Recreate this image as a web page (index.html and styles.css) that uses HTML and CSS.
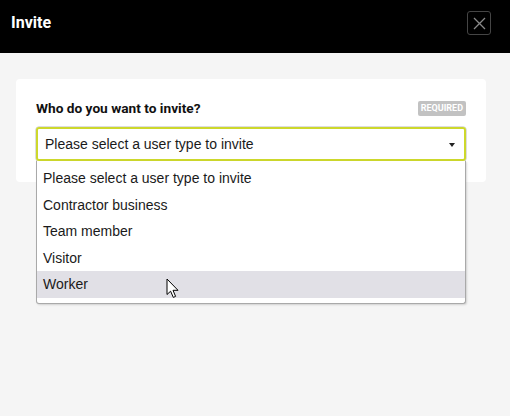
FILE: index.html
```html
<!DOCTYPE html>
<html>
<head>
<meta charset="utf-8">
<link rel="stylesheet" href="styles.css">
</head>
<body>
<div class="modal">
  <header class="modal-header">
    <h1 class="modal-title">Invite</h1>
    <button class="close-btn" aria-label="Close">
      <svg width="13" height="13" viewBox="0 0 13 13"><path d="M1 1L12 12M12 1L1 12" stroke="#8a8a8a" stroke-width="1.3" fill="none"/></svg>
    </button>
  </header>
  <main class="modal-body">
    <section class="card">
      <div class="field-head">
        <label class="field-label">Who do you want to invite?</label>
        <span class="badge">REQUIRED</span>
      </div>
      <div class="select-wrap">
        <div class="select">
          <span class="select-value">Please select a user type to invite</span>
          <span class="caret"></span>
        </div>
        <ul class="dropdown">
          <li class="option">Please select a user type to invite</li>
          <li class="option">Contractor business</li>
          <li class="option">Team member</li>
          <li class="option">Visitor</li>
          <li class="option active">Worker
            <svg class="cursor" width="14" height="21" viewBox="0 0 14 21"><path d="M1 1V16.5L4.6 13.2L7.3 19.4L9.6 18.4L7 12.3H12Z" fill="#fff" stroke="#000" stroke-width="1" stroke-linejoin="round"/></svg>
          </li>
        </ul>
      </div>
    </section>
  </main>
</div>
</body>
</html>
```
FILE: styles.css
```css
* { box-sizing: border-box; }
html, body { margin: 0; padding: 0; }
body {
  width: 510px;
  height: 416px;
  background: #f5f5f5;
  font-family: Roboto, "Liberation Sans", sans-serif;
  overflow: hidden;
}
.modal-header {
  height: 53px;
  background: #000;
  display: flex;
  align-items: center;
  justify-content: space-between;
  padding: 0 19px 0 11px;
}
.modal-title {
  margin: 0;
  color: #fff;
  font-size: 16px;
  font-weight: 700;
  margin-top: -8px;
}
.close-btn {
  width: 24px;
  height: 24px;
  border: 1px solid #454545;
  border-radius: 3px;
  background: #000;
  padding: 0;
  display: flex;
  align-items: center;
  justify-content: center;
  margin-top: -7px;
}
.modal-body {
  padding: 26px 24px 0 16px;
}
.card {
  background: #fff;
  border-radius: 4px;
  padding: 21px 20px 21px 20px;
}
.field-head {
  display: flex;
  justify-content: space-between;
  align-items: center;
  height: 16px;
  margin-bottom: 11px;
}
.field-label {
  font-size: 13.7px;
  font-weight: 700;
  color: #111;
}
.badge {
  background: #c2c2c2;
  color: #fff;
  font-size: 9px;
  font-weight: 700;
  height: 15px;
  line-height: 15px;
  padding: 0 3px;
  border-radius: 2px;
}
.select-wrap { position: relative; }
.select {
  height: 34px;
  border: 2px solid #cdd82c;
  border-radius: 3px;
  box-shadow: 0 0 0 0.5px #bbb;
  display: flex;
  align-items: center;
  justify-content: space-between;
  padding: 0 9px 0 7px;
  font-family: "Liberation Sans", Arial, sans-serif;
  font-size: 14px;
  color: #1a1a1a;
}
.caret {
  width: 0; height: 0;
  border-left: 3.5px solid transparent;
  border-right: 3.5px solid transparent;
  border-top: 4px solid #222;
  margin-top: 1px;
}
.dropdown {
  position: absolute;
  left: 0;
  right: 0;
  top: 34px;
  margin: 0;
  padding: 4px 0 5px;
  list-style: none;
  background: #fff;
  border: 1px solid #a9a9a9;
  border-top: none;
  border-radius: 0 0 3px 3px;
  box-shadow: 1px 1px 2px rgba(0,0,0,0.15);
  font-family: "Liberation Sans", Arial, sans-serif;
  font-size: 14px;
  color: #1a1a1a;
}
.option {
  height: 26.5px;
  line-height: 27px;
  padding: 0 6px;
  position: relative;
}
.option.active { background: #e1e0e6; }
.cursor {
  position: absolute;
  left: 129px;
  top: 7px;
}
```
